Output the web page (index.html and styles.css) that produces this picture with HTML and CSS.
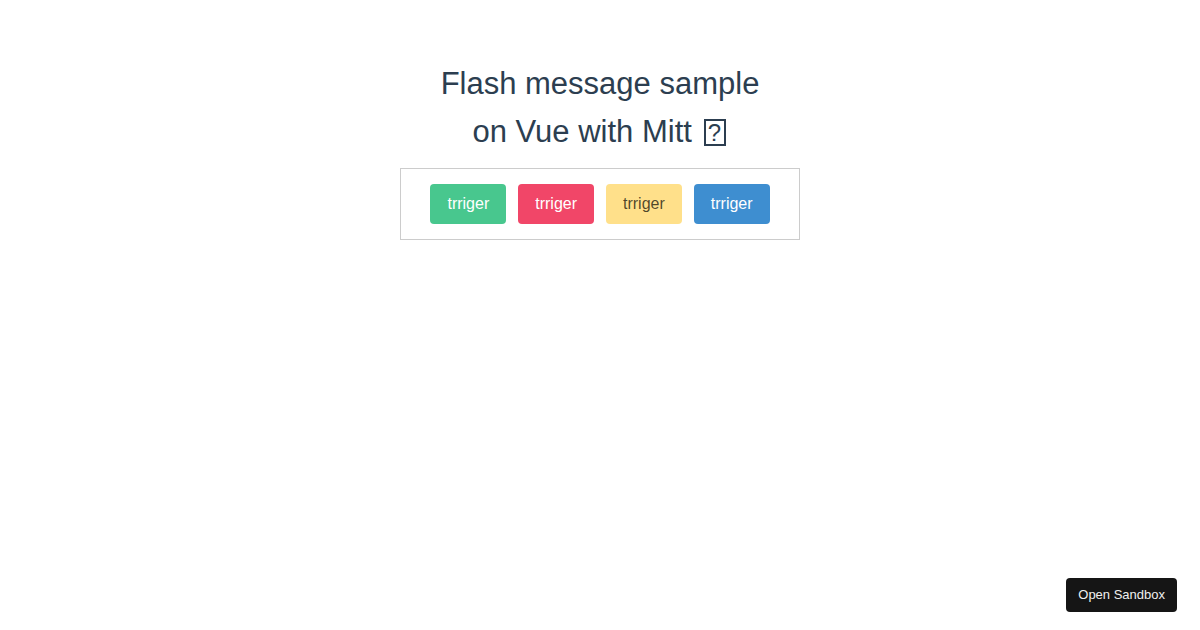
FILE: index.html
```html
<!DOCTYPE html>
<html lang="en">
  <head>
    <meta charset="UTF-8" />
    <meta name="viewport" content="width=device-width, initial-scale=1.0" />
    <title>Flash message sample</title>
    <link rel="stylesheet" href="styles.css">
  </head>

  <body>
    <div id="app">
      <h1 class="title">
        Flash message sample<br />
        on Vue with Mitt <span class="tofu">?</span>
      </h1>
      <div class="box">
        <button class="button is-success">trriger</button>
        <button class="button is-danger">trriger</button>
        <button class="button is-warning">trriger</button>
        <button class="button is-info">trriger</button>
      </div>
    </div>

    <a class="sandbox" href="#">Open Sandbox</a>
  </body>
</html>
```

FILE: styles.css
```css
body {
  margin: 0;
  padding: 0;
  background-color: #fff;
  font-family: "Liberation Sans", Arial, sans-serif;
}

#app {
  color: #2c3e50;
  text-align: center;
  padding-top: 60px;
}

.title {
  margin: 0;
  font-size: 31px;
  font-weight: normal;
  line-height: 48px;
}

.tofu {
  display: inline-block;
  box-sizing: border-box;
  width: 22px;
  height: 27px;
  margin: 0 2px 0 3px;
  border: 2px solid #2c3e50;
  font-size: 24px;
  line-height: 24px;
  vertical-align: 1px;
}

.box {
  width: 400px;
  box-sizing: border-box;
  margin: 12px auto 0;
  padding: 15px 0;
  border: 1px solid #ccc;
  display: flex;
  justify-content: center;
  gap: 12px;
}

.button {
  font-family: "Liberation Sans", Arial, sans-serif;
  font-size: 16px;
  line-height: 24px;
  padding: 7px 16px;
  border: 1px solid transparent;
  border-radius: 4px;
  color: #fff;
  cursor: pointer;
}

.is-success {
  background-color: #48c78e;
}

.is-danger {
  background-color: #f14668;
}

.is-warning {
  background-color: #ffe08a;
  color: rgba(0, 0, 0, 0.7);
}

.is-info {
  background-color: #3e8ed0;
}

.sandbox {
  position: fixed;
  right: 23px;
  bottom: 18px;
  background-color: #151515;
  color: #f0f0f0;
  font-size: 13px;
  line-height: 16px;
  padding: 9px 12px;
  border-radius: 4px;
  text-decoration: none;
}
```
